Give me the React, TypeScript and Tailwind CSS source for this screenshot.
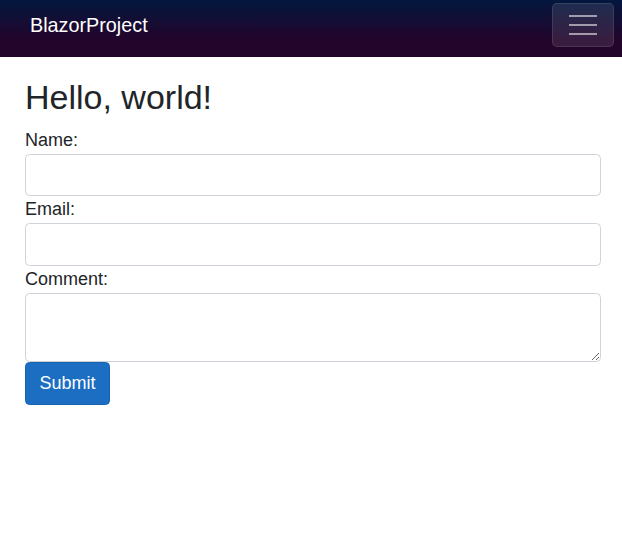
import React from "react";

export default function App() {
  return (
    <div className="min-h-[536px] bg-white font-['Liberation_Sans',Arial,sans-serif] text-[#212529]">
      <div className="relative h-[57px] bg-[linear-gradient(180deg,#03173e_0%,#23042b_70%)]">
        <div className="pl-[30px] pt-[10px] text-[19.8px] leading-[30px] text-white">BlazorProject</div>
        <button
          type="button"
          className="absolute right-[8px] top-[3px] flex h-[44px] w-[62px] flex-col items-center justify-center gap-[7px] rounded-[5px] border border-white/10 bg-white/10"
        >
          <span className="block h-[2px] w-[28px] bg-white/55" />
          <span className="block h-[2px] w-[28px] bg-white/55" />
          <span className="block h-[2px] w-[28px] bg-white/55" />
        </button>
      </div>
      <div className="pl-[25px] pr-[21px] pt-[20px]">
        <h1 className="mb-[9px] text-[34px] leading-[41px] font-normal">Hello, world!</h1>
        <div className="flex flex-col text-[18px] leading-[27px]">
          <label>Name:</label>
          <input
            type="text"
            className="h-[42px] w-full rounded-[4.5px] border border-[#ced4da] bg-white px-[13px] outline-none"
          />
          <label>Email:</label>
          <input
            type="text"
            className="h-[43px] w-full rounded-[4.5px] border border-[#ced4da] bg-white px-[13px] outline-none"
          />
          <label>Comment:</label>
          <textarea className="h-[69px] w-full rounded-[4.5px] border border-[#ced4da] bg-white px-[13px] py-[6px] outline-none" />
          <div>
            <button
              type="button"
              className="h-[43px] rounded-[4.5px] border border-[#1861ac] bg-[#1b6ec2] px-[13.5px] text-[18px] leading-[27px] text-white"
            >
              Submit
            </button>
          </div>
        </div>
      </div>
    </div>
  );
}
